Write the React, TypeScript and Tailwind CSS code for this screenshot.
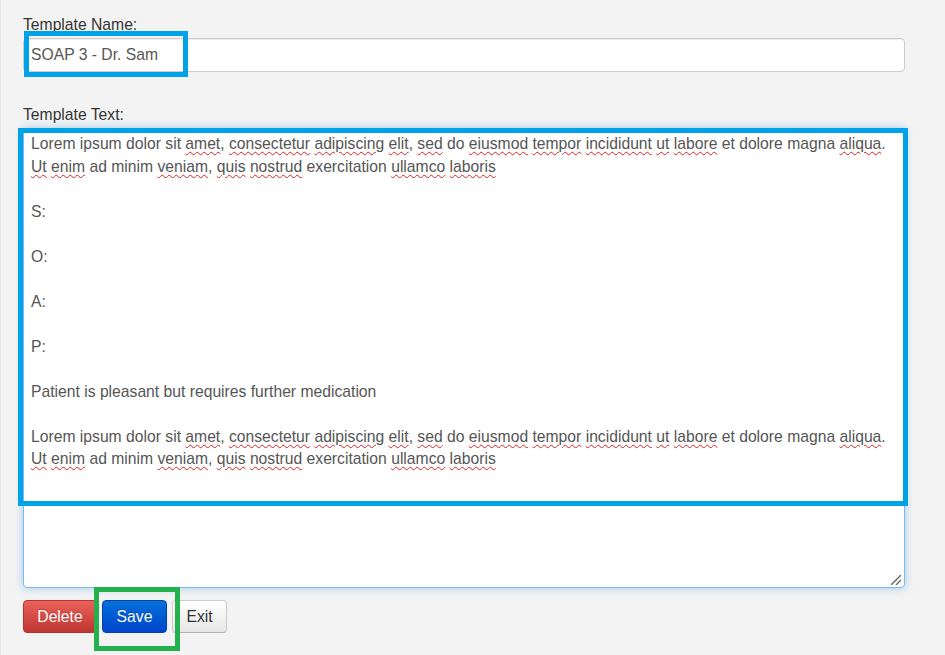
import React from "react";

type Word = { t: string; bad?: boolean };

// words flagged by the spell checker get a red wavy underline
function line(text: string, bad: string[]): Word[] {
  return text.split(" ").map((w) => ({ t: w, bad: bad.includes(w.replace(/[.,]/g, "")) }));
}

const lorem1 = line(
  "Lorem ipsum dolor sit amet, consectetur adipiscing elit, sed do eiusmod tempor incididunt ut labore et dolore magna aliqua.",
  ["amet", "consectetur", "adipiscing", "elit", "sed", "eiusmod", "tempor", "incididunt", "ut", "labore", "aliqua"]
);
const lorem2 = line("Ut enim ad minim veniam, quis nostrud exercitation ullamco laboris", [
  "Ut",
  "enim",
  "veniam",
  "quis",
  "nostrud",
  "ullamco",
  "laboris",
]);

function Line({ words }: { words: Word[] }) {
  return (
    <div className="whitespace-nowrap">
      {words.map((w, i) => {
        const punct = w.t.match(/[.,]$/)?.[0] ?? "";
        const core = punct ? w.t.slice(0, -1) : w.t;
        return (
          <React.Fragment key={i}>
            {i > 0 && " "}
            {w.bad ? (
              <>
                <span className="underline decoration-wavy decoration-[#e02020] decoration-1 underline-offset-[2px]">
                  {core}
                </span>
                {punct}
              </>
            ) : (
              w.t
            )}
          </React.Fragment>
        );
      })}
    </div>
  );
}

const plain = (s: string) => <div className="whitespace-pre">{s || " "}</div>;

export default function App() {
  return (
    <div
      className="relative min-h-[655px] w-[945px] overflow-hidden border-l border-[#e6e6e6] bg-[#f3f3f3] pl-[22px] pt-[14px] text-[15.7px] text-[#333]"
      style={{ fontFamily: '"Liberation Sans", Arial, sans-serif' }}
    >
      <label className="block leading-[21px]">Template Name:</label>
      <div className="mt-[3px] flex h-[34px] w-[882px] items-center rounded-[4px] border border-[#cccccc] bg-white px-[7px] text-[#555] shadow-[inset_0_1px_1px_rgba(0,0,0,0.075)]">
        SOAP 3 - Dr. Sam
      </div>

      <label className="mt-[32px] block leading-[21px]">Template Text:</label>
      <div className="relative mt-[3px] h-[460px] w-[882px] rounded-[4px] border border-[#7db9ec] bg-white px-[7px] pt-[4px] leading-[22.5px] text-[#555] shadow-[inset_0_1px_1px_rgba(0,0,0,0.075),0_0_8px_rgba(102,175,233,0.6)]">
        <Line words={lorem1} />
        <Line words={lorem2} />
        {plain("")}
        {plain("S:")}
        {plain("")}
        {plain("O:")}
        {plain("")}
        {plain("A:")}
        {plain("")}
        {plain("P:")}
        {plain("")}
        {plain("Patient is pleasant but requires further medication")}
        {plain("")}
        <Line words={lorem1} />
        <Line words={lorem2} />
        <svg className="absolute bottom-[2px] right-[3px] h-[10px] w-[10px]" viewBox="0 0 10 10">
          <path d="M10 0L0 10M10 5L5 10" stroke="#666" strokeWidth="1.4" />
        </svg>
      </div>

      <div className="mt-[12px] flex gap-[5px]">
        <button className="h-[33px] w-[74px] rounded-[4px] border border-[#b8322c] bg-gradient-to-b from-[#ec615c] to-[#bd362f] text-white [text-shadow:0_-1px_0_rgba(0,0,0,0.25)]">
          Delete
        </button>
        <button className="h-[33px] w-[65px] rounded-[4px] border border-[#0040b5] bg-gradient-to-b from-[#0870d9] to-[#0044cc] text-white [text-shadow:0_-1px_0_rgba(0,0,0,0.25)]">
          Save
        </button>
        <button className="h-[33px] w-[55px] rounded-[4px] border border-[#cccccc] border-b-[#b3b3b3] bg-gradient-to-b from-white to-[#e6e6e6] text-[#333] shadow-[inset_0_1px_0_rgba(255,255,255,0.2)]">
          Exit
        </button>
      </div>

      {/* annotation boxes drawn over the screenshot */}
      <div className="pointer-events-none absolute left-[23px] top-[31px] h-[46px] w-[164px] border-[5px] border-[#00a2e8]" />
      <div className="pointer-events-none absolute left-[17px] top-[128px] h-[378px] w-[890px] border-[5px] border-[#00a2e8]" />
      <div className="pointer-events-none absolute left-[93px] top-[587px] h-[64px] w-[86px] border-[5px] border-[#22b14c]" />
    </div>
  );
}
